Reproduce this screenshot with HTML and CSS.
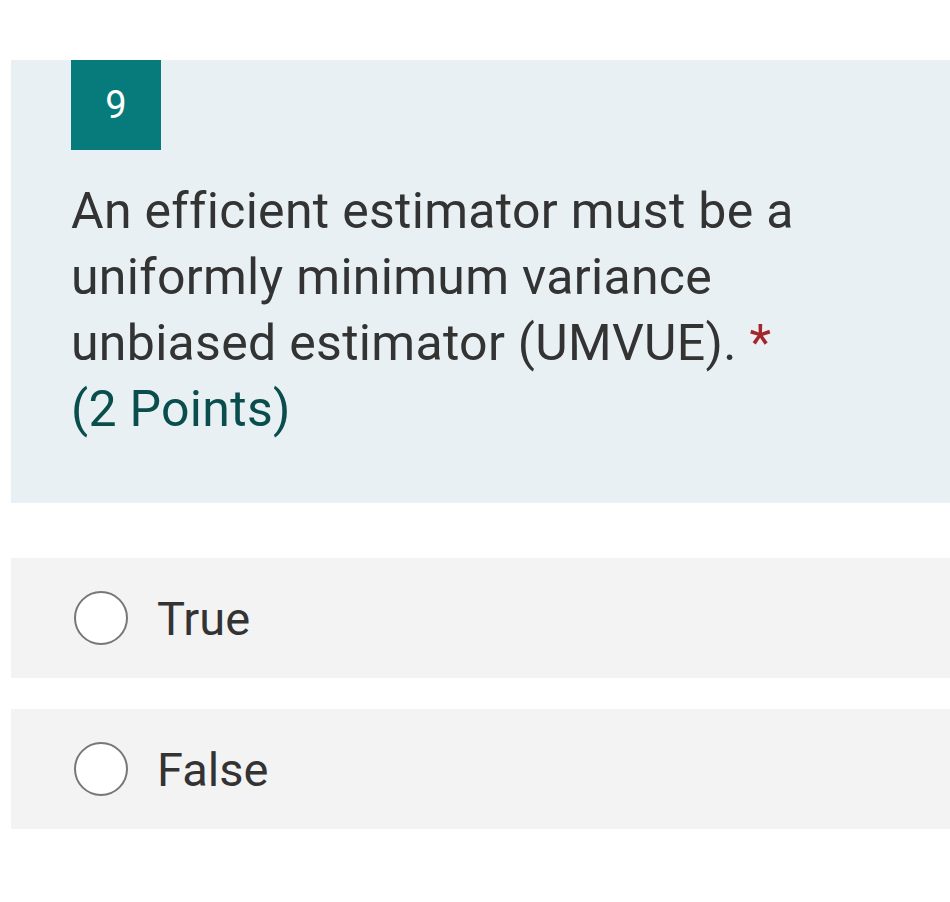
FILE: index.html
```html
<!DOCTYPE html>
<html>
<head>
<meta charset="utf-8">
<link rel="stylesheet" href="styles.css">
</head>
<body>
<div class="page">
  <section class="question">
    <div class="badge">9</div>
    <div class="title">An efficient estimator must be a uniformly minimum variance unbiased estimator (UMVUE). <span class="req">*</span></div>
    <div class="points">(2 Points)</div>
  </section>
  <div class="options">
    <label class="option"><span class="radio"></span><span class="label">True</span></label>
    <label class="option"><span class="radio"></span><span class="label">False</span></label>
  </div>
</div>
</body>
</html>
```
FILE: styles.css
```css
html, body { margin: 0; padding: 0; background: #fff; }
body { font-family: Roboto, "Noto Sans", sans-serif; color: #333; }
.page { padding: 60px 0 0 11px; width: 939px; }
.question { background: #e8f0f3; padding: 0 60px 0 60px; height: 443px; box-sizing: border-box; }
.badge { width: 90px; height: 90px; background: #077b7b; color: #fff; font-size: 38px; display: flex; align-items: center; justify-content: center; }
.title { margin-top: 28px; font-size: 50px; letter-spacing: 0.3px; line-height: 66px; color: #333; width: 760px; }
.req { color: #a4262c; }
.points { font-size: 50px; letter-spacing: 0.3px; line-height: 66px; color: #0a4d4d; }
.options { margin-top: 55px; display: flex; flex-direction: column; gap: 31px; }
.option { background: #f3f3f3; height: 120px; display: flex; align-items: center; padding-left: 63px; }
.radio { width: 50px; height: 50px; border: 2px solid #777; border-radius: 50%; background: #fff; flex: none; }
.label { margin-left: 29px; font-size: 47px; color: #333; }
```
